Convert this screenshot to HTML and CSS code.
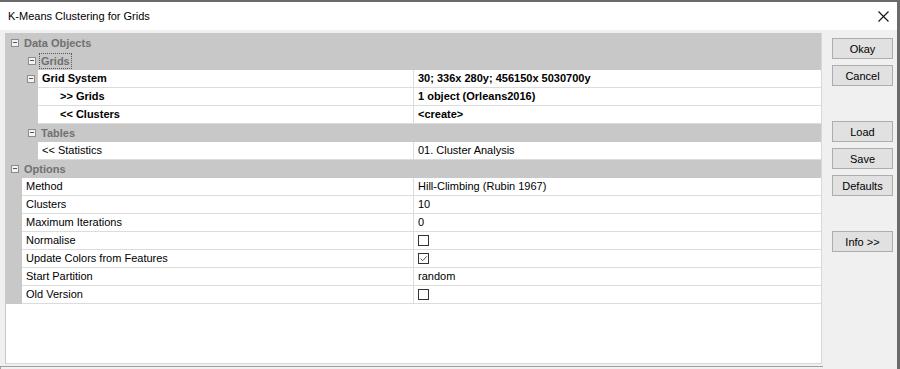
FILE: index.html
```html
<!DOCTYPE html>
<html lang="en">

<head>
  <meta charset="UTF-8">
  <link rel="stylesheet" href="styles.css">
  <title>K-Means Clustering for Grids</title>
</head>

<body>
  <div class="window">
    <div class="titlebar">
      <span class="title">K-Means Clustering for Grids</span>
      <svg class="close" width="11" height="11" viewBox="0 0 11 11"><path d="M0.5 0.5 L10.5 10.5 M10.5 0.5 L0.5 10.5" stroke="#111" stroke-width="1.1"/></svg>
    </div>

    <div class="content">
      <div class="main">
        <div class="pg">
          <div class="row cat">
            <span class="indent" style="width: 5px"></span>
            <span class="tog"></span>
            <span class="cat-name">Data Objects</span>
          </div>
          <div class="row cat">
            <span class="indent" style="width: 22px"></span>
            <span class="tog"></span>
            <span class="cat-name focus">Grids</span>
          </div>
          <div class="row item">
            <span class="indent" style="width: 32px"><span class="tog"></span></span>
            <span class="name bold">Grid System</span>
            <span class="value bold">30; 336x 280y; 456150x 5030700y</span>
          </div>
          <div class="row item">
            <span class="indent" style="width: 32px"></span>
            <span class="name bold sub">&gt;&gt; Grids</span>
            <span class="value bold">1 object (Orleans2016)</span>
          </div>
          <div class="row item">
            <span class="indent" style="width: 32px"></span>
            <span class="name bold sub">&lt;&lt; Clusters</span>
            <span class="value bold">&lt;create&gt;</span>
          </div>
          <div class="row cat">
            <span class="indent" style="width: 22px"></span>
            <span class="tog"></span>
            <span class="cat-name">Tables</span>
          </div>
          <div class="row item">
            <span class="indent" style="width: 32px"></span>
            <span class="name">&lt;&lt; Statistics</span>
            <span class="value">01. Cluster Analysis</span>
          </div>
          <div class="row cat">
            <span class="indent" style="width: 5px"></span>
            <span class="tog"></span>
            <span class="cat-name">Options</span>
          </div>
          <div class="row item">
            <span class="indent" style="width: 16px"></span>
            <span class="name">Method</span>
            <span class="value">Hill-Climbing (Rubin 1967)</span>
          </div>
          <div class="row item">
            <span class="indent" style="width: 16px"></span>
            <span class="name">Clusters</span>
            <span class="value">10</span>
          </div>
          <div class="row item">
            <span class="indent" style="width: 16px"></span>
            <span class="name">Maximum Iterations</span>
            <span class="value">0</span>
          </div>
          <div class="row item">
            <span class="indent" style="width: 16px"></span>
            <span class="name">Normalise</span>
            <span class="value"><span class="check"></span></span>
          </div>
          <div class="row item">
            <span class="indent" style="width: 16px"></span>
            <span class="name">Update Colors from Features</span>
            <span class="value"><span class="check"><svg width="11" height="11" viewBox="0 0 11 11"><path d="M2.5 5.5 L4.7 7.7 L8.8 3.3" fill="none" stroke="#555" stroke-width="1"/></svg></span></span>
          </div>
          <div class="row item">
            <span class="indent" style="width: 16px"></span>
            <span class="name">Start Partition</span>
            <span class="value">random</span>
          </div>
          <div class="row item">
            <span class="indent" style="width: 16px"></span>
            <span class="name">Old Version</span>
            <span class="value"><span class="check"></span></span>
          </div>
        </div>
        <div class="lower"></div>
      </div>

      <div class="buttons">
        <button>Okay</button>
        <button>Cancel</button>
        <button class="gap">Load</button>
        <button>Save</button>
        <button>Defaults</button>
        <button class="gap">Info &gt;&gt;</button>
      </div>
    </div>
  </div>
</body>

</html>
```

FILE: styles.css
```css
body {
  margin: 0;
  font-family: 'Liberation Sans', Arial, sans-serif;
  font-size: 11px;
  color: #000;
  background-color: #6a6a6a;
}

.window {
  height: 367px;
  margin-top: 2px;
  margin-right: 3px;
  background-color: #f0f0f0;
  overflow: hidden;
}

.titlebar {
  height: 28px;
  background-color: #fff;
  display: flex;
  align-items: center;
  justify-content: space-between;
  padding: 0 8px 0 8px;
}

.title {
  font-size: 11px;
}

.content {
  display: flex;
  padding-top: 3px;
}

.main {
  margin-left: 5px;
  width: 817px;
}

.pg {
  height: 329px;
  background-color: #fff;
  border: 1px solid #c8c8c8;
  border-right-color: #d8d8d8;
  border-bottom-color: #d8d8d8;
}

.row {
  display: flex;
  height: 18px;
  align-items: stretch;
}

.cat {
  background-color: #c8c8c8;
  align-items: center;
}

.indent {
  flex: none;
  background-color: #c8c8c8;
  display: flex;
  align-items: center;
  justify-content: flex-end;
  padding-right: 3px;
  box-sizing: border-box;
}

.tog {
  flex: none;
  width: 6px;
  height: 6px;
  margin-right: 5px;
  border: 1px solid #8c8c8c;
  background-color: #f2f2f2;
  position: relative;
}

.tog::after {
  content: "";
  position: absolute;
  left: 1px;
  top: 2px;
  width: 4px;
  height: 1px;
  background-color: #555;
}

.indent .tog {
  margin-right: 0;
}

.cat-name {
  color: #707070;
  font-weight: bold;
}

.focus {
  border: 1px dotted #555;
  padding: 0 1px;
  margin-left: -2px;
  line-height: 14px;
}

.name {
  flex: 1;
  background-color: #fff;
  border-bottom: 1px solid #dcdcdc;
  padding-left: 4px;
  line-height: 17px;
  white-space: nowrap;
}

.sub {
  padding-left: 22px;
}

.value {
  flex: none;
  width: 403px;
  background-color: #fff;
  border-left: 1px solid #dcdcdc;
  border-bottom: 1px solid #dcdcdc;
  padding-left: 4px;
  line-height: 17px;
  display: flex;
  align-items: center;
}

.bold {
  font-weight: bold;
}

.check {
  display: inline-block;
  width: 11px;
  height: 11px;
  border: 1px solid #333;
  box-sizing: border-box;
  background-color: #fff;
  position: relative;
}

.check svg {
  position: absolute;
  left: -1px;
  top: -1px;
}

.lower {
  margin-top: 2px;
  height: 10px;
  border-top: 1px solid #a0a0a0;
  border-left: 1px solid #a0a0a0;
  margin-left: -5px;
  width: 822px;
}

.buttons {
  display: flex;
  flex-direction: column;
  margin-left: 10px;
  padding-top: 5px;
}

button {
  width: 61px;
  height: 21px;
  margin-bottom: 6px;
  background-color: #e1e1e1;
  border: 1px solid #adadad;
  font-family: 'Liberation Sans', Arial, sans-serif;
  font-size: 11px;
  color: #000;
  padding: 0;
}

button.gap {
  margin-top: 29px;
}
```
